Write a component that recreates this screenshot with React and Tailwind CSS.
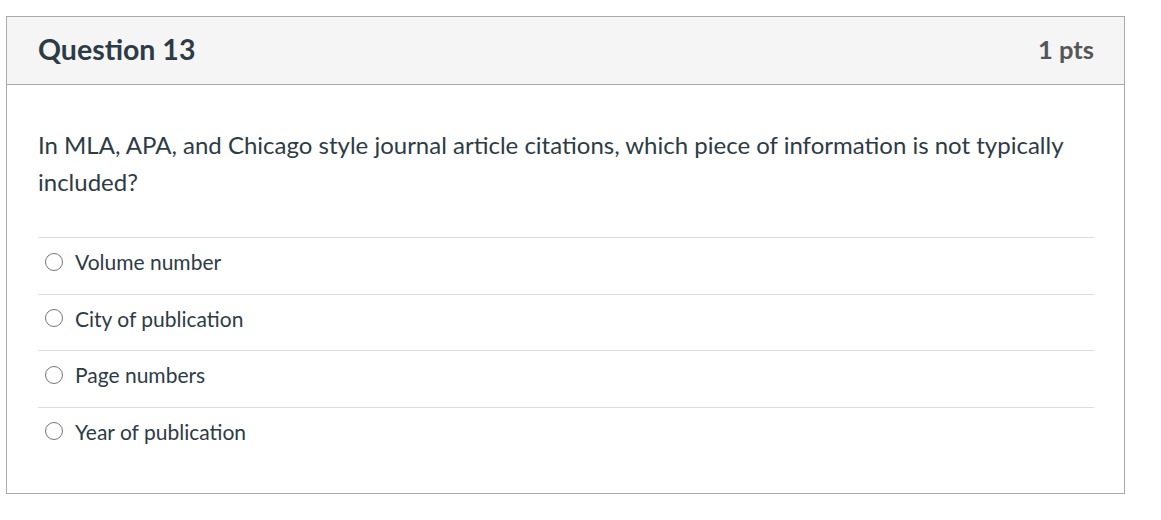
const answers = [
  "Volume number",
  "City of publication",
  "Page numbers",
  "Year of publication",
];

function Radio() {
  return (
    <span className="w-[18px] h-[18px] rounded-full border-[1.5px] border-[#767676] bg-white shrink-0" />
  );
}

export default function App() {
  return (
    <div className="bg-white w-[1161px] h-[520px] pt-4 pl-[6px] font-['Lato','Liberation_Sans',sans-serif] text-[#2d3b45]">
      <div className="w-[1119px] h-[478px] border border-[#aaaaaa] flex flex-col">
        <div className="h-[68px] bg-[#f5f5f5] border-b border-[#aaaaaa] flex items-center justify-between pl-[31px] pr-[30px]">
          <h2 className="text-[28.5px] font-bold pb-[2px]">Question 13</h2>
          <span className="text-[25.5px] font-bold text-[#565656] pb-[2px]">1 pts</span>
        </div>
        <div className="px-[31px] pt-[41px]">
          <p className="text-[24px] leading-[37px]">
            In MLA, APA, and Chicago style journal article citations, which piece of information is not typically included?
          </p>
          <div className="mt-[37px] mr-[-1px]">
            {answers.map((a) => (
              <div key={a} className="border-t border-[#dddddd] h-[56.5px] flex items-center gap-[12px] pl-[7px] pb-[8px]">
                <Radio />
                <span className="text-[21px]">{a}</span>
              </div>
            ))}
          </div>
        </div>
      </div>
    </div>
  );
}
